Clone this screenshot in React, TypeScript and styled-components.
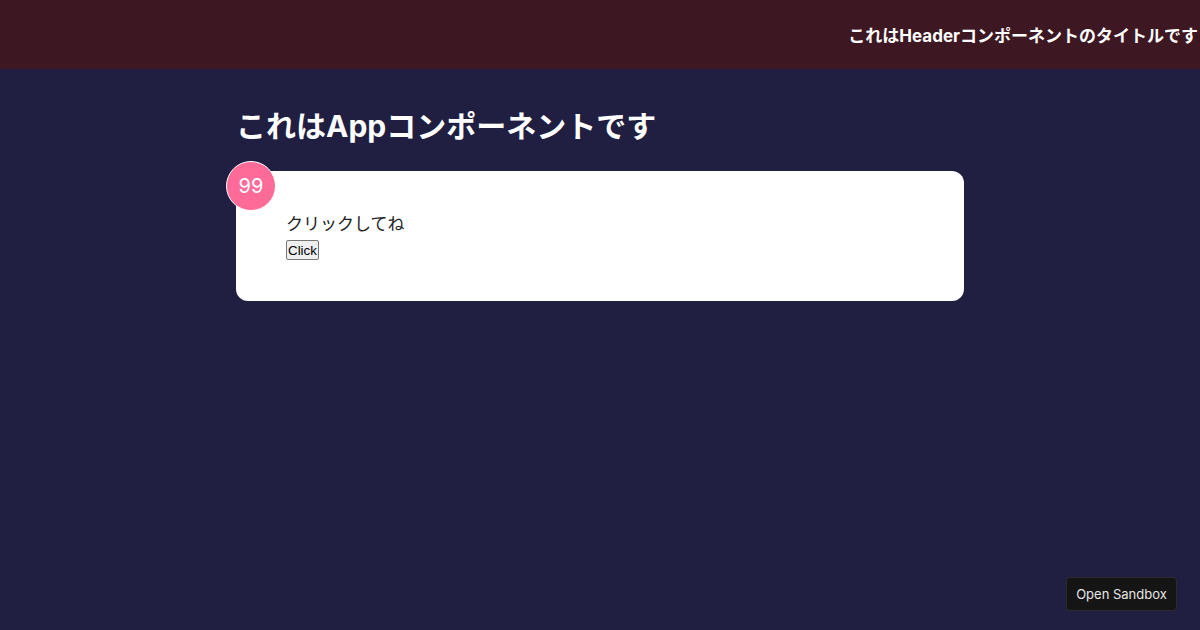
import React from "react";
import styled, { createGlobalStyle } from "styled-components";

const GlobalStyle = createGlobalStyle`
  html, body { margin: 0; padding: 0; }
  body {
    background: #201f42;
    font-family: Inter, "Noto Sans", "Noto Sans CJK JP", sans-serif;
    width: 1200px;
    height: 630px;
    overflow: hidden;
  }
`;

const Page = styled.div`
  width: 1200px;
  height: 630px;
  display: flex;
  flex-direction: column;
  position: relative;
`;

const HeaderBar = styled.header`
  height: 69px;
  background: #3d1722;
  display: flex;
  align-items: center;
  justify-content: flex-end;
  padding-right: 2px;
  white-space: nowrap;
`;

const HeaderTitle = styled.h1`
  margin: 0;
  color: #ffffff;
  font-size: 17px;
  font-weight: 700;
  font-family: "Noto Sans CJK JP", sans-serif;
`;

const Latin = styled.span`
  font-family: Inter, "Noto Sans", sans-serif;
  font-weight: 700;
`;

const Main = styled.main`
  width: 728px;
  margin: 0 auto;
  padding-top: 35px;
  display: flex;
  flex-direction: column;
`;

const AppTitle = styled.h2`
  margin: 0 0 25px;
  color: #ffffff;
  font-size: 30px;
  line-height: 40px;
  font-weight: 700;
  font-family: "Noto Sans CJK JP", sans-serif;
`;

const Card = styled.section`
  position: relative;
  background: #ffffff;
  border-radius: 12px;
  padding: 41px 50px 41px;
  display: flex;
  flex-direction: column;
  align-items: flex-start;
  gap: 6px;
`;

const Badge = styled.div`
  position: absolute;
  left: -10px;
  top: -10px;
  width: 48px;
  height: 48px;
  border-radius: 50%;
  background: #ff6b98;
  border: 1px solid #ffffff;
  color: #ffffff;
  font-size: 20px;
  font-weight: 400;
  font-family: Inter, sans-serif;
  display: flex;
  align-items: center;
  justify-content: center;
`;

const CardText = styled.p`
  margin: 0;
  color: #222222;
  font-size: 17px;
  line-height: 22px;
  font-family: "Noto Sans CJK JP", sans-serif;
`;

const ClickButton = styled.button`
  font-family: "Liberation Sans", Arial, sans-serif;
  font-size: 13.33px;
  padding: 1px 1px;
  border: 1px solid #767676;
  border-radius: 2px;
  background: #efefef;
  color: #000;
  height: 20px;
`;

const SandboxButton = styled.button`
  position: absolute;
  right: 23px;
  bottom: 19px;
  width: 111px;
  height: 34px;
  background: #151515;
  color: #e6e6e6;
  border: 1px solid #2b2b2b;
  border-radius: 4px;
  font-size: 13px;
  font-family: Inter, "Noto Sans", sans-serif;
`;

export default function App() {
  return (
    <Page>
      <GlobalStyle />
      <HeaderBar>
        <HeaderTitle>
          これは<Latin>Header</Latin>コンポーネントのタイトルです
        </HeaderTitle>
      </HeaderBar>
      <Main>
        <AppTitle>
          これは<Latin>App</Latin>コンポーネントです
        </AppTitle>
        <Card>
          <Badge>99</Badge>
          <CardText>クリックしてね</CardText>
          <ClickButton>Click</ClickButton>
        </Card>
      </Main>
      <SandboxButton>Open Sandbox</SandboxButton>
    </Page>
  );
}
